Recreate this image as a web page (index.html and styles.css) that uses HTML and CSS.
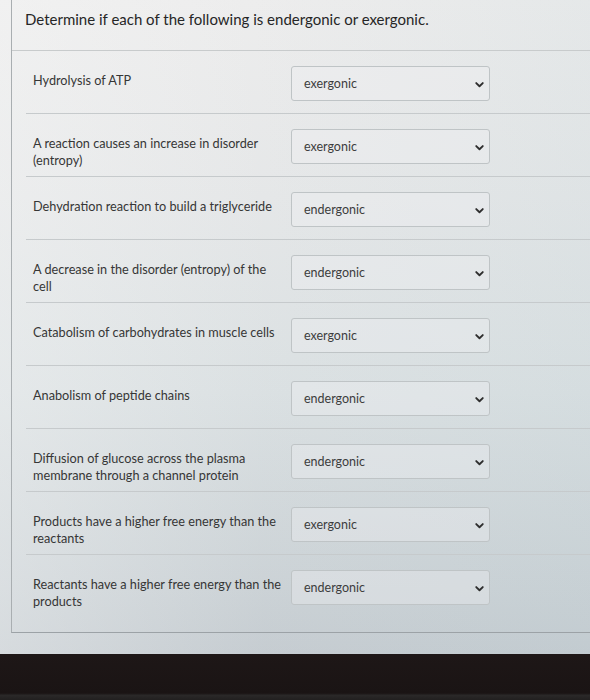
FILE: index.html
```html
<!DOCTYPE html>
<html lang="en">
<head>
<meta charset="utf-8">
<title>Endergonic or exergonic</title>
<link rel="stylesheet" href="styles.css">
</head>
<body>
<div class="screen">
  <div class="question">
    <div class="title">Determine if each of the following is endergonic or exergonic.</div>
    <div class="rows">
      <div class="row">
        <div class="label">Hydrolysis of ATP</div>
        <div class="select"><span>exergonic</span><svg class="chev" viewBox="0 0 10 7" width="9" height="6"><path d="M1.2 1.3 L5 5 L8.8 1.3" /></svg></div>
      </div>
      <div class="row">
        <div class="label">A reaction causes an increase in disorder (entropy)</div>
        <div class="select"><span>exergonic</span><svg class="chev" viewBox="0 0 10 7" width="9" height="6"><path d="M1.2 1.3 L5 5 L8.8 1.3" /></svg></div>
      </div>
      <div class="row">
        <div class="label">Dehydration reaction to build a triglyceride</div>
        <div class="select"><span>endergonic</span><svg class="chev" viewBox="0 0 10 7" width="9" height="6"><path d="M1.2 1.3 L5 5 L8.8 1.3" /></svg></div>
      </div>
      <div class="row">
        <div class="label">A decrease in the disorder (entropy) of the cell</div>
        <div class="select"><span>endergonic</span><svg class="chev" viewBox="0 0 10 7" width="9" height="6"><path d="M1.2 1.3 L5 5 L8.8 1.3" /></svg></div>
      </div>
      <div class="row">
        <div class="label">Catabolism of carbohydrates in muscle cells</div>
        <div class="select"><span>exergonic</span><svg class="chev" viewBox="0 0 10 7" width="9" height="6"><path d="M1.2 1.3 L5 5 L8.8 1.3" /></svg></div>
      </div>
      <div class="row">
        <div class="label">Anabolism of peptide chains</div>
        <div class="select"><span>endergonic</span><svg class="chev" viewBox="0 0 10 7" width="9" height="6"><path d="M1.2 1.3 L5 5 L8.8 1.3" /></svg></div>
      </div>
      <div class="row">
        <div class="label">Diffusion of glucose across the plasma membrane through a channel protein</div>
        <div class="select"><span>endergonic</span><svg class="chev" viewBox="0 0 10 7" width="9" height="6"><path d="M1.2 1.3 L5 5 L8.8 1.3" /></svg></div>
      </div>
      <div class="row">
        <div class="label">Products have a higher free energy than the reactants</div>
        <div class="select"><span>exergonic</span><svg class="chev" viewBox="0 0 10 7" width="9" height="6"><path d="M1.2 1.3 L5 5 L8.8 1.3" /></svg></div>
      </div>
      <div class="row">
        <div class="label">Reactants have a higher free energy than the products</div>
        <div class="select"><span>endergonic</span><svg class="chev" viewBox="0 0 10 7" width="9" height="6"><path d="M1.2 1.3 L5 5 L8.8 1.3" /></svg></div>
      </div>
    </div>
  </div>
</div>
<div class="bezel"></div>
</body>
</html>
```

FILE: styles.css
```css
html, body {
  margin: 0;
  padding: 0;
}

body {
  width: 590px;
  height: 700px;
  overflow: hidden;
  font-family: Lato, "Open Sans", sans-serif;
  background: #1c1617;
}

.screen {
  height: 654px;
  box-sizing: border-box;
  padding-left: 11px;
  background:
    linear-gradient(90deg, rgba(250, 250, 250, 0.35) 0%, rgba(250, 250, 250, 0.05) 45%, rgba(190, 210, 215, 0.15) 100%),
    linear-gradient(180deg, #ececec 0%, #e4e6e7 30%, #d9dfe1 60%, #c9d0d4 90%, #c3cacf 100%);
}

.question {
  border-left: 1px solid #a9aeb1;
  border-bottom: 1px solid #9ca2a6;
  height: 633px;
  box-sizing: border-box;
}

.title {
  font-size: 15px;
  line-height: 20px;
  color: #262626;
  padding: 9px 0 0 13px;
  height: 51px;
  box-sizing: border-box;
  border-bottom: 1px solid #c8cbcc;
}

.rows {
  margin-left: 14px;
}

.row {
  display: flex;
  align-items: flex-start;
  height: 63px;
  box-sizing: border-box;
  border-bottom: 1px solid #c6cacc;
  padding-left: 7px;
}

.row:last-child {
  border-bottom: none;
}

.label {
  flex: 0 0 252px;
  font-size: 12.7px;
  line-height: 17px;
  color: #363636;
  padding-top: 21px;
}

.select {
  margin-top: 15px;
  margin-left: 6px;
  width: 199px;
  height: 35px;
  box-sizing: border-box;
  border: 1px solid #bfc4c6;
  border-radius: 3px;
  background: rgba(240, 242, 243, 0.35);
  display: flex;
  align-items: center;
  justify-content: space-between;
  padding: 0 5px 0 12px;
  font-size: 12.5px;
  color: #3d3d3d;
}

.chev {
  fill: none;
  stroke: #2e2e2e;
  stroke-width: 2.2;
  stroke-linecap: round;
  stroke-linejoin: round;
  margin-top: 3px;
}

.bezel {
  height: 46px;
  background: linear-gradient(180deg, #1e1717 0%, #1a1414 85%, #2a2828 90%, #222020 100%);
}
```
